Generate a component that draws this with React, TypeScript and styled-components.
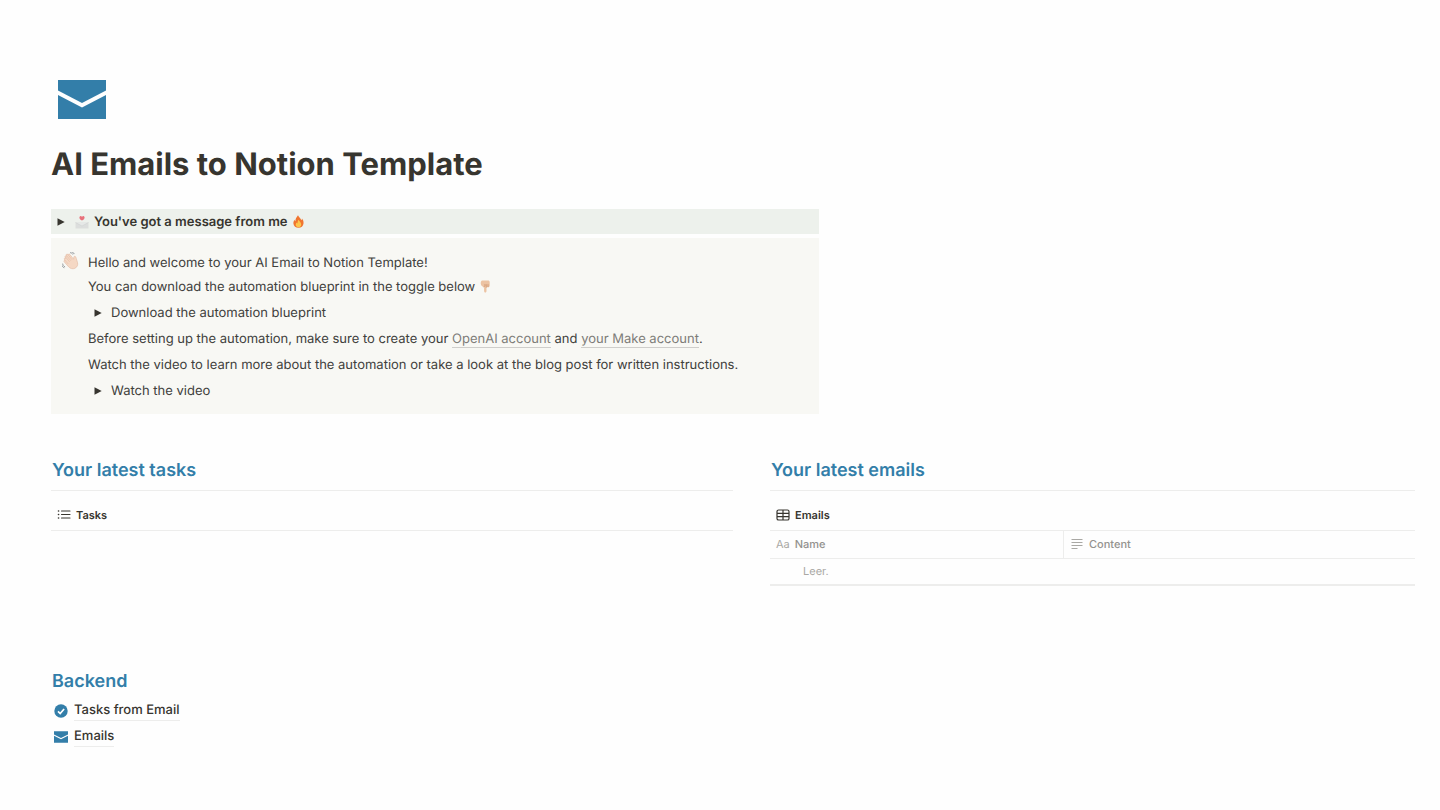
import React from "react";
import styled, { createGlobalStyle } from "styled-components";

const color = {
  ink: "#37352f",
  body: "#40403c",
  blue: "#337ea9",
  muted: "#93928e",
  faint: "#a9a8a4",
  line: "#ededec",
};

const GlobalStyle = createGlobalStyle`
  *, *::before, *::after { box-sizing: border-box; }
  body {
    margin: 0;
    background: #fefefe;
    color: ${color.ink};
    font-family: Inter, "Liberation Sans", sans-serif;
    font-size: 13px;
    line-height: 20px;
    text-rendering: geometricPrecision;
  }
`;

const Page = styled.main`
  padding: 80px 25px 60px 51px;
`;

const PageIcon = styled.svg`
  display: block;
  width: 48px;
  height: 39px;
  margin-left: 7px;
`;

const Title = styled.h1`
  margin: 26px 0 0;
  font-size: 31px;
  line-height: 40px;
  font-weight: 700;
`;

const Intro = styled.section`
  display: flex;
  flex-direction: column;
  gap: 4px;
  max-width: 768px;
  margin-top: 24px;
`;

const Toggle = styled.button<{ $banner?: boolean }>`
  display: flex;
  align-items: center;
  width: 100%;
  height: ${(p) => (p.$banner ? 25 : 20)}px;
  padding: 0 6px;
  border: 0;
  background: ${(p) => (p.$banner ? "#edf1ec" : "transparent")};
  color: ${(p) => (p.$banner ? color.ink : color.body)};
  font: inherit;
  font-weight: ${(p) => (p.$banner ? 600 : 400)};
  text-align: left;
  text-rendering: inherit;
  cursor: pointer;
`;

const Arrow = styled.svg<{ $gap: number }>`
  flex: none;
  width: 8px;
  height: 8px;
  margin-right: ${(p) => p.$gap}px;
  fill: ${color.ink};
`;

const Emoji = styled.svg<{ $size: number }>`
  flex: none;
  width: ${(p) => p.$size}px;
  height: ${(p) => p.$size}px;
  vertical-align: -2px;
`;

const BannerText = styled.span`
  margin: 0 4px 0 5px;
`;

const Callout = styled.div`
  display: flex;
  gap: 8px;
  padding: 14px 12px 13px 11px;
  background: #f8f8f4;
`;

const CalloutBody = styled.div`
  display: flex;
  flex-direction: column;
  gap: 6px;
  flex: 1;
  padding-top: 1px;
  color: ${color.body};
`;

const Text = styled.p`
  margin: 0;
`;

const Lines = styled.div`
  display: flex;
  flex-direction: column;
  gap: 4px;
`;

const TextLink = styled.a`
  color: #7d7c78;
  text-decoration: none;
  border-bottom: 1px solid #cfcecb;
`;

const Columns = styled.div`
  display: grid;
  grid-template-columns: 682fr 645fr;
  gap: 37px;
  margin-top: 43px;
`;

const Heading = styled.h2`
  margin: 0;
  padding-left: 1px;
  color: ${color.blue};
  font-size: 18px;
  line-height: 28px;
  font-weight: 600;
`;

const Divider = styled.hr`
  margin: 5px 0 0;
  border: 0;
  border-top: 1px solid ${color.line};
`;

const ViewBar = styled.div`
  display: flex;
  height: 40px;
  padding: 8px 0 0 6px;
  border-bottom: 1px solid ${color.line};
`;

const ViewTab = styled.button`
  display: flex;
  align-items: center;
  gap: 5px;
  height: 32px;
  padding: 0;
  border: 0;
  background: none;
  color: ${color.ink};
  font: inherit;
  font-size: 11px;
  font-weight: 600;
  text-rendering: inherit;
  cursor: pointer;
`;

const Table = styled.table`
  width: 100%;
  border-collapse: collapse;
  table-layout: fixed;
  font-size: 11px;
  line-height: 16px;
`;

const HeadCell = styled.th<{ $width?: string }>`
  width: ${(p) => p.$width ?? "auto"};
  height: 27px;
  padding: 0 6px;
  border-bottom: 1px solid ${color.line};
  color: ${color.muted};
  font-weight: 500;
  text-align: left;

  & + & {
    border-left: 1px solid ${color.line};
  }
`;

const CellLabel = styled.span`
  display: flex;
  align-items: center;
  gap: 5px;
`;

const TypeMark = styled.span`
  color: ${color.faint};
  font-weight: 400;
`;

const EmptyCell = styled.td`
  height: 27px;
  padding: 0 0 0 33px;
  border-bottom: 2px solid ${color.line};
  color: ${color.faint};
`;

const Backend = styled.section`
  margin-top: 82px;
`;

const PageList = styled.ul`
  display: flex;
  flex-direction: column;
  gap: 6px;
  margin: 5px 0 0;
  padding: 0 0 0 3px;
  list-style: none;
`;

const PageLink = styled.a`
  display: flex;
  align-items: center;
  gap: 6px;
  width: fit-content;
  color: ${color.ink};
  font-weight: 500;
  text-decoration: none;
`;

const PageName = styled.span`
  line-height: 19px;
  border-bottom: 1px solid ${color.line};
`;

const Glyph = styled.svg`
  flex: none;
  width: 14px;
  height: 14px;
`;

const ToggleArrow = ({ gap }: { gap: number }) => (
  <Arrow $gap={gap} viewBox="0 0 8 8" aria-hidden="true">
    <path d="M0.5 0.3 7.7 4 0.5 7.7z" />
  </Arrow>
);

const LoveLetter = () => (
  <Emoji $size={14} viewBox="0 0 14 14" aria-hidden="true">
    <path d="M0.5 7.500h13v6h-13z" fill="#dcdedd" />
    <path d="M0.5 7.500 7 11l6.500-3.500" fill="#e6e8e7" stroke="#cfd2d0" strokeWidth="0.6" />
    <path d="M7 5.600C4.600 4.100 4.200 2.900 4.500 1.900 5 .7 6.500.7 7 1.900c.5-1.200 2-1.200 2.500 0 .3 1-.1 2.200-2.500 3.700z" fill="#e8717b" />
  </Emoji>
);

const Fire = () => (
  <Emoji $size={13} viewBox="0 0 13 13" aria-hidden="true">
    <path d="M6 .3c.6 2 3 3 3.300 5 .5-.4.7-1 .7-1.700 1.200 1.500 1.700 3 1.500 4.800-.3 2.700-2.300 4.300-5 4.300S1.600 11 1.400 8.400c-.1-1.500.4-2.700 1.200-3.700.1.700.3 1.200.8 1.500C3.300 3.800 4.600 2.200 6 .3z" fill="#f0752f" />
    <path d="M6.700 4.800c.2 1.500 2.500 2.500 2.500 4.700 0 1.700-1.100 2.700-2.700 2.700S3.700 11.200 3.700 9.700c0-1 .4-1.600 1-2.200.1.500.4.8.8 1 0-1.500.3-2.600 1.200-3.700z" fill="#fcc64b" />
  </Emoji>
);

const Wave = () => (
  <Emoji $size={18} viewBox="0 0 18 18" aria-hidden="true">
    <path d="M3.200 5.100c-.6-.9.600-1.700 1.300-.9L4.300 3.300c-.5-1 .8-1.700 1.500-.8l.5.600c-.2-1 1-1.500 1.600-.6l3.700 4.700c.3-1-.2-2.300.7-2.800 1-.5 1.600.6 1.900 1.800l1.300 4.300c.7 2.500-.4 4.800-2.600 5.800-2.300 1-4.700.3-6.300-1.500L2.100 9.700c-.7-.9.400-1.800 1.200-1L2.400 7.400c-.6-.9.400-1.800 1.300-.9z" fill="#f5d8c4" stroke="#e0b79f" strokeWidth="0.6" />
    <path d="m3.700 5.100 4 4.800M4.600 3.700l4.200 5M6.400 3.200l3.700 4.500M3.300 8.700 6.300 12" fill="none" stroke="#e0b79f" strokeWidth="0.5" />
    <path d="M8.500.7c1 .1 1.700.6 2.100 1.400M10.500.2c.8.300 1.300.8 1.600 1.500M.7 12c.1 1.300.8 2.300 2 2.800M.3 14c.3.900.8 1.400 1.600 1.700" fill="none" stroke="#8a9094" strokeWidth="0.9" strokeLinecap="round" />
  </Emoji>
);

const PointDown = () => (
  <Emoji $size={13} viewBox="0 0 13 13" aria-hidden="true">
    <path d="M3 .6h6c1 0 1.700.7 1.700 1.700v3.200c0 1.200-.9 1.800-2 1.600-.4.300-.8.400-1.200.300V11c0 .9-.5 1.500-1.200 1.500S5.100 11.900 5.100 11V6.900C3.500 6.900 2 5.600 1.800 4 1.600 2.500 2 1 3 .6z" fill="#ecc3a3" />
    <path d="M4.900 6.900c.9-.4 1.300-1.300 1-2.300M7.200 7.200V4.600M9 6.800V4.600" fill="none" stroke="#c98f6a" strokeWidth="0.7" strokeLinecap="round" />
  </Emoji>
);

const ListGlyph = () => (
  <Glyph viewBox="0 0 14 14" fill="none" stroke={color.ink} aria-hidden="true">
    <path d="M4.500 3h8.500M4.500 6.500h8.500M4.500 10h8.500" strokeWidth="1.100" strokeLinecap="round" />
    <path d="M1.500 3h.1M1.500 6.500h.1M1.500 10h.1" strokeWidth="1.600" strokeLinecap="round" />
  </Glyph>
);

const TableGlyph = () => (
  <Glyph viewBox="0 0 14 14" fill="none" stroke={color.ink} strokeWidth="1.200" aria-hidden="true">
    <rect x="1" y="2" width="12" height="10" rx="1.600" />
    <path d="M1 5.300h12M1 8.600h12M7 2v10" />
  </Glyph>
);

const TextGlyph = () => (
  <Glyph viewBox="0 0 14 14" fill="none" stroke={color.faint} strokeWidth="1.100" aria-hidden="true">
    <path d="M1.500 2.500h11M1.500 5.500h11M1.500 8.500h11M1.500 11.500h6" />
  </Glyph>
);

const CheckGlyph = () => (
  <Glyph viewBox="0 0 14 14" aria-hidden="true">
    <circle cx="7" cy="7" r="6.700" fill={color.blue} />
    <path d="m4 7.300 2.200 2.200L10.100 5" fill="none" stroke="#fff" strokeWidth="1.700" />
  </Glyph>
);

const MailShape = () => (
  <>
    <path d="M0 0h48v10.500L24 23 0 10.500z" fill={color.blue} />
    <path d="M0 15 24 27.500 48 15V39H0z" fill={color.blue} />
  </>
);

export default function App() {
  return (
    <>
      <GlobalStyle />
      <Page>
        <PageIcon viewBox="0 0 48 39" aria-hidden="true">
          <MailShape />
        </PageIcon>
        <Title>AI Emails to Notion Template</Title>

        <Intro>
          <Toggle type="button" $banner>
            <ToggleArrow gap={10} />
            <LoveLetter />
            <BannerText>You've got a message from me</BannerText>
            <Fire />
          </Toggle>
          <Callout>
            <Wave />
            <CalloutBody>
              <Lines>
                <Text>Hello and welcome to your AI Email to Notion Template!</Text>
                <Text>
                  You can download the automation blueprint in the toggle below <PointDown />
                </Text>
              </Lines>
              <Toggle type="button">
                <ToggleArrow gap={9} />
                Download the automation blueprint
              </Toggle>
              <Text>
                Before setting up the automation, make sure to create your{" "}
                <TextLink href="#openai">OpenAI account</TextLink> and{" "}
                <TextLink href="#make">your Make account</TextLink>.
              </Text>
              <Text>
                Watch the video to learn more about the automation or take a look at the blog post for
                written instructions.
              </Text>
              <Toggle type="button">
                <ToggleArrow gap={9} />
                Watch the video
              </Toggle>
            </CalloutBody>
          </Callout>
        </Intro>

        <Columns>
          <section>
            <Heading>Your latest tasks</Heading>
            <Divider />
            <ViewBar>
              <ViewTab type="button">
                <ListGlyph />
                Tasks
              </ViewTab>
            </ViewBar>
          </section>
          <section>
            <Heading>Your latest emails</Heading>
            <Divider />
            <ViewBar>
              <ViewTab type="button">
                <TableGlyph />
                Emails
              </ViewTab>
            </ViewBar>
            <Table>
              <thead>
                <tr>
                  <HeadCell scope="col" $width="45.500%">
                    <CellLabel>
                      <TypeMark aria-hidden="true">Aa</TypeMark>
                      Name
                    </CellLabel>
                  </HeadCell>
                  <HeadCell scope="col">
                    <CellLabel>
                      <TextGlyph />
                      Content
                    </CellLabel>
                  </HeadCell>
                </tr>
              </thead>
              <tbody>
                <tr>
                  <EmptyCell colSpan={2}>Leer.</EmptyCell>
                </tr>
              </tbody>
            </Table>
          </section>
        </Columns>

        <Backend>
          <Heading>Backend</Heading>
          <PageList>
            <li>
              <PageLink href="#tasks">
                <CheckGlyph />
                <PageName>Tasks from Email</PageName>
              </PageLink>
            </li>
            <li>
              <PageLink href="#emails">
                <Glyph viewBox="0 0 48 39" aria-hidden="true">
                  <MailShape />
                </Glyph>
                <PageName>Emails</PageName>
              </PageLink>
            </li>
          </PageList>
        </Backend>
      </Page>
    </>
  );
}
